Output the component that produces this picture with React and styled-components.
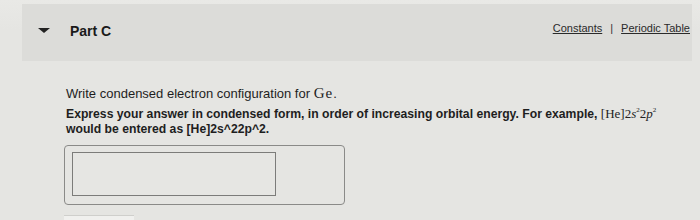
import React from "react";
import styled, { createGlobalStyle } from "styled-components";

const GlobalStyle = createGlobalStyle`
  html, body {
    margin: 0;
    padding: 0;
    background: #e5e5e2;
    font-family: "Liberation Sans", Arial, sans-serif;
    color: #1e1e1e;
  }
`;

const Page = styled.div`
  width: 700px;
  height: 220px;
  overflow: hidden;
  padding-top: 4px;
  box-sizing: border-box;
  background: linear-gradient(#e9e9e6, #e5e5e2 30px);
`;

const Header = styled.header`
  display: flex;
  align-items: flex-start;
  justify-content: space-between;
  margin-left: 22px;
  width: 670px;
  height: 57px;
  padding: 0 2px 0 16px;
  box-sizing: border-box;
  background: #dcdcd9;
`;

const TitleWrap = styled.div`
  display: flex;
  align-items: center;
  gap: 20px;
  margin-top: 19px;
`;

const Caret = styled.span`
  width: 0;
  height: 0;
  border-left: 6px solid transparent;
  border-right: 6px solid transparent;
  border-top: 5px solid #222;
  margin-top: -2px;
`;

const Title = styled.h2`
  margin: 0;
  font-size: 14px;
  font-weight: bold;
  color: #1a1a1a;
`;

const Links = styled.nav`
  display: flex;
  align-items: center;
  gap: 8px;
  margin-top: 18px;
  font-size: 11px;
  color: #333;
`;

const Link = styled.a`
  color: #2a2a2a;
  text-decoration: underline;
`;

const Content = styled.section`
  padding: 24px 0 0 66px;
`;

const Prompt = styled.p`
  margin: 0;
  font-size: 13px;
  line-height: 17px;
`;

const Serif = styled.span`
  font-family: "Liberation Serif", "Times New Roman", serif;
  font-size: 15px;
  letter-spacing: 1px;
`;

const Instructions = styled.p`
  margin: 4px 0 0;
  font-size: 12.2px;
  font-weight: bold;
  line-height: 15px;
`;

const MathSpan = styled.span`
  font-family: "Liberation Serif", "Times New Roman", serif;
  font-weight: normal;
  font-size: 13px;
  color: #222;
`;

const Sup = styled.sup`
  font-size: 7px;
  vertical-align: 6px;
  line-height: 0;
`;

const AnswerBox = styled.div`
  margin: 8px 0 0 -2px;
  width: 281px;
  height: 60px;
  box-sizing: border-box;
  border: 1px solid #8a8a88;
  border-radius: 4px;
  padding: 6px 0 0 7px;
`;

const Field = styled.div`
  width: 204px;
  height: 44px;
  box-sizing: border-box;
  border: 1px solid #7c7c7a;
  background: #e6e6e3;
`;

const SubmitStub = styled.div`
  margin: 10px 0 0 -2px;
  width: 70px;
  height: 10px;
  background: #f0f0ee;
  border-top: 1px solid #cfcfcc;
`;

export default function App() {
  return (
    <>
      <GlobalStyle />
      <Page>
        <Header>
          <TitleWrap>
            <Caret />
            <Title>Part C</Title>
          </TitleWrap>
          <Links>
            <Link>Constants</Link>
            <span>|</span>
            <Link>Periodic Table</Link>
          </Links>
        </Header>
        <Content>
          <Prompt>
            Write condensed electron configuration for <Serif>Ge</Serif>.
          </Prompt>
          <Instructions>
            Express your answer in condensed form, in order of increasing orbital energy. For example,{" "}
            <MathSpan>
              [He]2<i>s</i>
              <Sup>2</Sup>2<i>p</i>
              <Sup>2</Sup>
            </MathSpan>
            <br />
            would be entered as [He]2s^22p^2.
          </Instructions>
          <AnswerBox>
            <Field />
          </AnswerBox>
          <SubmitStub />
        </Content>
      </Page>
    </>
  );
}
